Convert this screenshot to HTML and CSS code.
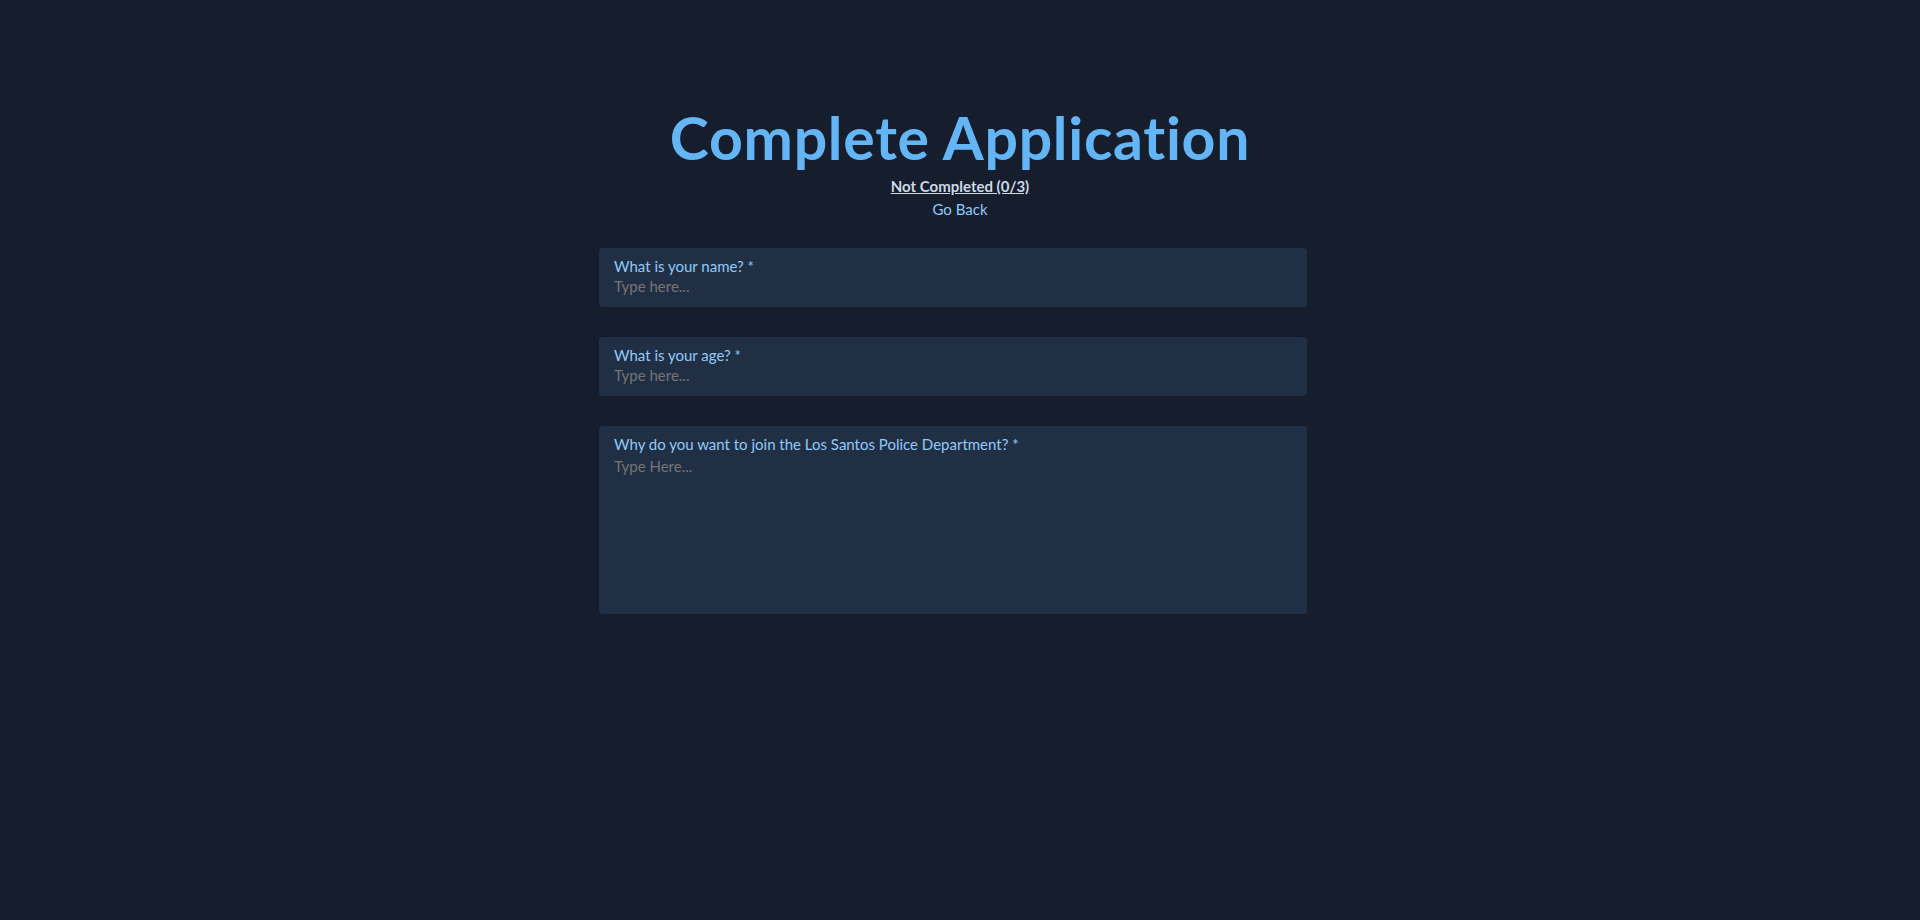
FILE: index.html
```html
<!DOCTYPE html>
<html lang="en">
<head>
<meta charset="utf-8">
<title>Complete Application</title>
<link rel="stylesheet" href="styles.css">
</head>
<body>
<main class="page">
  <header class="head">
    <h1 class="title">Complete Application</h1>
    <div class="status">Not Completed (0/3)</div>
    <a class="back" href="#">Go Back</a>
  </header>
  <form class="form">
    <label class="field">
      <span class="label">What is your name? *</span>
      <input class="input" type="text" placeholder="Type here...">
    </label>
    <label class="field">
      <span class="label">What is your age? *</span>
      <input class="input" type="text" placeholder="Type here...">
    </label>
    <label class="field field-tall">
      <span class="label">Why do you want to join the Los Santos Police Department? *</span>
      <textarea class="area" placeholder="Type Here..."></textarea>
    </label>
  </form>
</main>
</body>
</html>
```
FILE: styles.css
```css
html, body {
  margin: 0;
  padding: 0;
  background: #161d2c;
  height: 100%;
}
body {
  font-family: Lato, "Noto Sans", sans-serif;
  color: #90caf9;
  font-variant-ligatures: none;
}
.page {
  padding-top: 109px;
  display: flex;
  flex-direction: column;
  align-items: center;
}
.head {
  display: flex;
  flex-direction: column;
  align-items: center;
}
.title {
  margin: 0 0 9px;
  font-size: 59px;
  line-height: 58px;
  font-weight: 700;
  letter-spacing: 0.7px;
  color: #64b5f6;
}
.status {
  font-size: 15px;
  line-height: 20px;
  font-weight: 700;
  color: #cfd9e6;
  text-decoration: underline;
  margin-bottom: 3px;
}
.back {
  font-size: 15px;
  line-height: 20px;
  color: #90caf9;
  text-decoration: none;
}
.form {
  width: 722px;
  margin-top: 29px;
  display: flex;
  flex-direction: column;
  gap: 30px;
}
.field {
  width: 708px;
  height: 59px;
  box-sizing: border-box;
  background: #212f45;
  border-radius: 4px;
  padding: 8px 15px 11px;
  display: flex;
  flex-direction: column;
}
.field-tall {
  height: 188px;
}
.label {
  font-size: 15px;
  line-height: 20px;
  color: #90caf9;
}
.input, .area {
  font-family: Lato, "Noto Sans", sans-serif;
  font-size: 15px;
  line-height: 20px;
  color: #e0e0e0;
  background: transparent;
  border: 0;
  outline: none;
  padding: 0;
  margin: 0;
}
.input {
  height: 20px;
}
.area {
  margin-top: 2px;
  flex: 1;
  resize: none;
}
.input::placeholder, .area::placeholder {
  color: #757575;
}
```
